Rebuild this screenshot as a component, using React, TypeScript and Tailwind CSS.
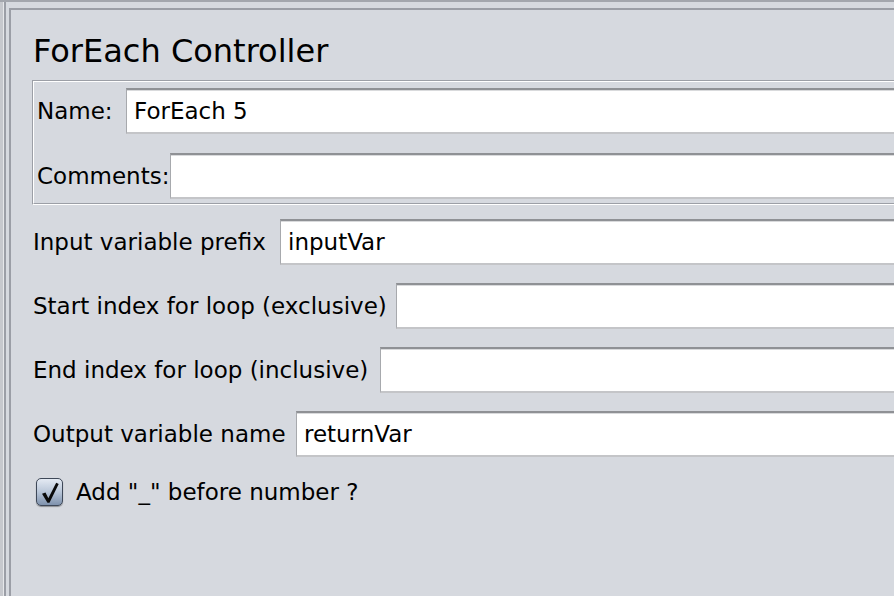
import React from 'react';

const font = { fontFamily: '"DejaVu Sans", "Liberation Sans", sans-serif' };

const Field: React.FC<{ value?: string }> = ({ value = '' }) => (
    <div className="flex-1 h-[46px] bg-white border-t-2 border-t-[#8f9195] border-l border-l-[#a7a9ad] border-b-2 border-b-[#c4c5c8] shadow-[inset_0_1px_0_#d9dadc] flex items-center pl-[7px] text-[23px] text-black">
        {value}
    </div>
);

const Row: React.FC<{ label: string; labelWidth: string; value?: string }> = ({ label, labelWidth, value }) => (
    <div className="flex items-center h-[46px]">
        <div className={`${labelWidth} shrink-0 text-[23px] text-black whitespace-nowrap`}>{label}</div>
        <Field value={value} />
    </div>
);

export default function App() {
    return (
        <div className="w-[894px] h-[596px] overflow-hidden bg-[#d6d9df] border-t-2 border-[#a3a6ad] flex" style={font}>
            <div className="w-[3px] shrink-0 bg-[#c6c8cd]" />
            <div className="w-px shrink-0 bg-[#e6e7ea]" />
            <div className="w-[2px] shrink-0 bg-[#9b9ea6]" />
            <div className="flex-1 min-w-0 pt-[6px] pl-[3px]">
                <div className="h-full w-[1000px] border-t-2 border-l-2 border-[#9b9ea6] pl-[21px] pt-[21px]">
                    <h1 className="text-[32px] leading-[40px] text-black pl-px">ForEach Controller</h1>

                    <div className="mt-[9px] border-t border-l border-[#9c9fa6] border-b border-b-white">
                        <div className="border-t border-l border-white border-b border-b-[#9c9fa6] pl-[3px] pt-[6px] pb-[4px]">
                            <Row label="Name:" labelWidth="w-[89px]" value="ForEach 5" />
                            <div className="mt-[19px]">
                                <Row label="Comments:" labelWidth="w-[133px]" />
                            </div>
                        </div>
                    </div>

                    <div className="flex flex-col gap-[18px] mt-[14px] pl-px">
                        <Row label="Input variable prefix" labelWidth="w-[247px]" value="inputVar" />
                        <Row label="Start index for loop (exclusive)" labelWidth="w-[363px]" />
                        <Row label="End index for loop (inclusive)" labelWidth="w-[347px]" />
                        <Row label="Output variable name" labelWidth="w-[263px]" value="returnVar" />
                    </div>

                    <div className="flex items-center mt-[18px] pl-[4px]">
                        <div className="w-[27px] h-[28px] rounded-[5px] border border-[#3e4858] bg-gradient-to-b from-[#e4eaf3] via-[#b9c6d8] to-[#7f92ad] shadow-[0_1px_1px_rgba(0,0,0,0.35)] flex items-center justify-center">
                            <svg width="23" height="23" viewBox="0 0 20 20">
                                <path d="M3.5 11 L6.5 10 L9 15 L15.8 1.5 L18 2.5 L10 19 L8.2 19 Z" fill="#0a0a0a" />
                            </svg>
                        </div>
                        <span className="ml-[13px] text-[23px] text-black whitespace-nowrap">Add "_" before number ?</span>
                    </div>
                </div>
            </div>
        </div>
    );
}
